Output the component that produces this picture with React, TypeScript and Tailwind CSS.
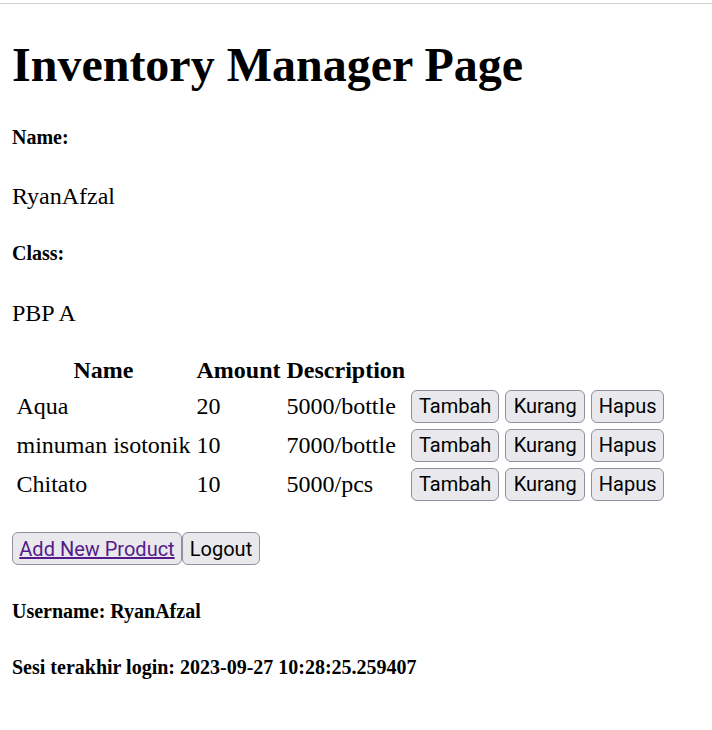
import React from "react";

const serif = { fontFamily: '"Liberation Serif", "Times New Roman", serif' } as const;

const btn =
  "inline-flex items-center justify-center h-[33px] border border-[#8f8f9d] bg-[#e9e9ed] rounded-[6px] text-[20px] leading-[24px] text-black font-['Roboto',sans-serif]";

const products = [
  { name: "Aqua", amount: 20, desc: "5000/bottle" },
  { name: "minuman isotonik", amount: 10, desc: "7000/bottle" },
  { name: "Chitato", amount: 10, desc: "5000/pcs" },
];

export default function App() {
  return (
    <div className="bg-white min-h-[730px] w-full text-black font-['Liberation_Serif','Times_New_Roman',serif]" style={serif}>
      <div className="h-[3px]" />
      <div className="border-t border-[#d0d0d7]" />
      <div className="px-[12px]">
        <h1 className="mt-[33px] text-[48px] leading-[56px] font-bold">Inventory Manager Page</h1>
        <h5 className="mt-[33px] text-[20px] leading-[23px] font-bold">Name:</h5>
        <p className="mt-[33px] text-[24px] leading-[28px]">RyanAfzal</p>
        <h5 className="mt-[32px] text-[20px] leading-[23px] font-bold">Class:</h5>
        <p className="mt-[34px] text-[24px] leading-[28px]">PBP A</p>

        <table className="mt-[24px] border-separate border-spacing-[3px] text-[24px] leading-[28px]">
          <thead>
            <tr>
              <th className="p-[1.5px] font-bold text-center">Name</th>
              <th className="p-[1.5px] font-bold text-center">Amount</th>
              <th className="p-[1.5px] font-bold text-center">Description</th>
            </tr>
          </thead>
          <tbody>
            {products.map((p) => (
              <tr key={p.name}>
                <td className="p-[1.5px] align-middle whitespace-nowrap">{p.name}</td>
                <td className="p-[1.5px] align-middle">{p.amount}</td>
                <td className="p-[1.5px] align-middle whitespace-nowrap">{p.desc}</td>
                <td className="p-[1.5px] align-middle">
                  <div className="flex gap-[6px]">
                    <button className={`${btn} w-[88px]`}>Tambah</button>
                    <button className={`${btn} w-[80px]`}>Kurang</button>
                    <button className={`${btn} w-[73px]`}>Hapus</button>
                  </div>
                </td>
              </tr>
            ))}
          </tbody>
        </table>

        <div className="mt-[27px] flex">
          <button className={`${btn} h-[32px] w-[170px]`}>
            <a href="#" className="text-[#551a8b] underline">Add New Product</a>
          </button>
          <button className={`${btn} h-[32px] w-[78px]`}>Logout</button>
        </div>

        <h5 className="mt-[35px] text-[20px] leading-[23px] font-bold">Username: RyanAfzal</h5>
        <h5 className="mt-[33px] text-[20px] leading-[23px] font-bold">Sesi terakhir login: 2023-09-27 10:28:25.259407</h5>
      </div>
    </div>
  );
}
